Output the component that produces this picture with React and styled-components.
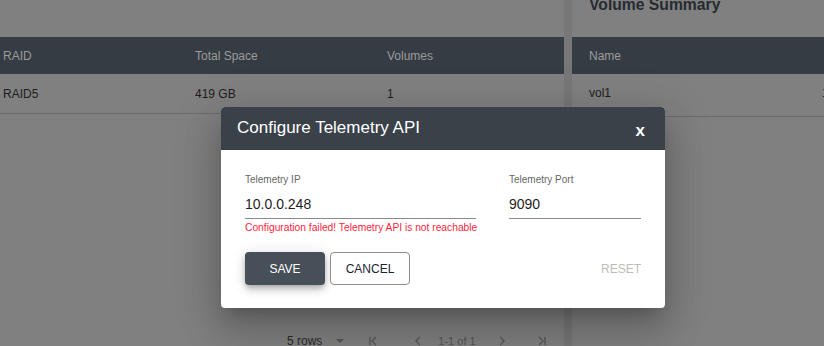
import React from "react";
import styled, { createGlobalStyle } from "styled-components";

const Global = createGlobalStyle`
  html, body { margin: 0; padding: 0; background: #808080; }
  body { font-family: "Liberation Sans", Arial, sans-serif; }
  * { box-sizing: border-box; }
`;

const Screen = styled.div`
  position: relative;
  width: 824px;
  height: 346px;
  overflow: hidden;
  background: #808080;
  display: flex;
  align-items: flex-start;
`;

const Panel = styled.section`
  width: ${(p) => p.$width};
  flex: ${(p) => (p.$grow ? 1 : "none")};
  display: flex;
  flex-direction: column;
  overflow: hidden;
`;

const Divider = styled.div`
  width: 8px;
  align-self: stretch;
  background: #777777;
`;

const TitleBar = styled.div`
  height: 37px;
  padding-left: ${(p) => p.$pad || 0}px;
`;

const Title = styled.h2`
  margin: -4px 0 0;
  font-size: 15.7px;
  line-height: 18px;
  font-weight: bold;
  color: #262b31;
  white-space: nowrap;
`;

const HeadRow = styled.div`
  display: flex;
  height: 37px;
  align-items: center;
  background: #353c44;
  padding-left: ${(p) => p.$pad}px;
`;

const BodyRow = styled.div`
  display: flex;
  height: ${(p) => p.$h}px;
  align-items: center;
  border-bottom: 1px solid #6c6c6c;
  padding-left: ${(p) => p.$pad}px;
  padding-bottom: ${(p) => p.$padBottom || 0}px;
`;

const Cell = styled.div`
  width: ${(p) => p.$w}px;
  flex: none;
  font-size: 12px;
  color: ${(p) => (p.$head ? "#9b9b9b" : "#1e1e1e")};
  white-space: nowrap;
`;

const Filler = styled.div`
  height: ${(p) => p.$h}px;
`;

const Pager = styled.div`
  display: flex;
  align-items: center;
  height: 40px;
  padding-left: 287px;
  font-size: 12px;
  color: #2a2a2a;
`;

const PagerText = styled.span`
  font-size: ${(p) => p.$size || 12}px;
  color: ${(p) => p.$color || "#2a2a2a"};
  margin-right: ${(p) => p.$mr || 0}px;
  white-space: nowrap;
`;

const PagerIcon = styled.svg`
  flex: none;
  margin-right: ${(p) => p.$mr || 0}px;
`;

const Overlay = styled.div`
  position: absolute;
  inset: 0;
  padding: 107px 0 0 221px;
`;

const Modal = styled.div`
  width: 444px;
  height: 201px;
  background: #ffffff;
  border-radius: 4px;
  overflow: hidden;
  box-shadow: 0 11px 15px -7px rgba(0, 0, 0, 0.2),
    0 24px 38px 3px rgba(0, 0, 0, 0.14), 0 9px 46px 8px rgba(0, 0, 0, 0.12);
  display: flex;
  flex-direction: column;
`;

const ModalHead = styled.div`
  height: 43px;
  background: #3a4149;
  display: flex;
  align-items: center;
  justify-content: space-between;
  padding: 0 20px 0 16px;
`;

const ModalTitle = styled.div`
  font-size: 17px;
  color: #ffffff;
  margin-top: -1px;
`;

const Close = styled.button`
  border: none;
  background: none;
  padding: 0;
  color: #ffffff;
  font-family: "Liberation Sans", Arial, sans-serif;
  font-weight: bold;
  font-size: 17px;
  line-height: 17px;
  margin-top: 3px;
`;

const ModalBody = styled.div`
  padding: 24px 24px 0;
`;

const Fields = styled.div`
  display: flex;
  gap: 33px;
`;

const Field = styled.div`
  width: ${(p) => p.$w}px;
  display: flex;
  flex-direction: column;
`;

const Label = styled.label`
  font-size: 10px;
  line-height: 12px;
  color: #666666;
`;

const Input = styled.div`
  margin-top: 10px;
  font-size: 14px;
  line-height: 17px;
  color: #1e1e1e;
  padding-bottom: 5px;
  border-bottom: 1px solid #8a8a8a;
`;

const ErrorText = styled.div`
  margin-top: 3px;
  font-size: 10.25px;
  line-height: 12px;
  color: #ff1f3d;
  white-space: nowrap;
`;

const Actions = styled.div`
  display: flex;
  align-items: center;
  gap: 5px;
  margin-top: 18px;
`;

const Button = styled.button`
  width: 80px;
  height: 33px;
  border-radius: 4px;
  font-family: "Liberation Sans", Arial, sans-serif;
  font-size: 12px;
  padding: 0;
  background: ${(p) => (p.$primary ? "#474f58" : "#ffffff")};
  color: ${(p) => (p.$primary ? "#ffffff" : "#1e2430")};
  border: ${(p) => (p.$primary ? "none" : "1px solid #8d8d8d")};
  box-shadow: ${(p) =>
    p.$primary
      ? "0 3px 5px -1px rgba(0,0,0,0.2), 0 5px 8px 0 rgba(0,0,0,0.14), 0 1px 14px 0 rgba(0,0,0,0.12)"
      : "none"};
`;

const TextButton = styled.button`
  margin-left: auto;
  border: none;
  background: none;
  padding: 0;
  font-family: "Liberation Sans", Arial, sans-serif;
  font-size: 12px;
  color: #bdbdbd;
`;

const Chevron = ({ dir, bar, mr }) => (
  <PagerIcon $mr={mr} width="12" height="12" viewBox="0 0 12 12" fill="none" stroke="#555" strokeWidth="1.3">
    {dir === "left" ? <path d="M8 2 L4 6 L8 10" /> : <path d="M4 2 L8 6 L4 10" />}
    {bar && (dir === "left" ? <path d="M2 2 V10" /> : <path d="M10 2 V10" />)}
  </PagerIcon>
);

export default function App() {
  return (
    <>
      <Global />
      <Screen>
        <Panel $width="564px">
          <TitleBar />
          <HeadRow $pad={3}>
            <Cell $w={192} $head>RAID</Cell>
            <Cell $w={192} $head>Total Space</Cell>
            <Cell $w={177} $head>Volumes</Cell>
          </HeadRow>
          <BodyRow $h={40} $pad={3}>
            <Cell $w={192}>RAID5</Cell>
            <Cell $w={192}>419 GB</Cell>
            <Cell $w={177}>1</Cell>
          </BodyRow>
          <Filler $h={207} />
          <Pager>
            <PagerText $mr={14}>5 rows</PagerText>
            <PagerIcon $mr={24} width="8" height="5" viewBox="0 0 8 5">
              <path d="M0 0 H8 L4 4 Z" fill="#555" />
            </PagerIcon>
            <Chevron dir="left" bar mr={32} />
            <Chevron dir="left" mr={14} />
            <PagerText $size={11} $color="#555" $mr={20}>1-1 of 1</PagerText>
            <Chevron dir="right" mr={27} />
            <Chevron dir="right" bar />
          </Pager>
        </Panel>
        <Divider />
        <Panel $grow>
          <TitleBar $pad={17}>
            <Title>Volume Summary</Title>
          </TitleBar>
          <HeadRow $pad={17}>
            <Cell $w={233} $head>Name</Cell>
          </HeadRow>
          <BodyRow $h={43} $pad={17} $padBottom={4}>
            <Cell $w={233}>vol1</Cell>
            <Cell $w={60}>1</Cell>
          </BodyRow>
        </Panel>
        <Overlay>
          <Modal>
            <ModalHead>
              <ModalTitle>Configure Telemetry API</ModalTitle>
              <Close>x</Close>
            </ModalHead>
            <ModalBody>
              <Fields>
                <Field $w={231}>
                  <Label>Telemetry IP</Label>
                  <Input>10.0.0.248</Input>
                  <ErrorText>Configuration failed! Telemetry API is not reachable</ErrorText>
                </Field>
                <Field $w={132}>
                  <Label>Telemetry Port</Label>
                  <Input>9090</Input>
                </Field>
              </Fields>
              <Actions>
                <Button $primary>SAVE</Button>
                <Button>CANCEL</Button>
                <TextButton>RESET</TextButton>
              </Actions>
            </ModalBody>
          </Modal>
        </Overlay>
      </Screen>
    </>
  );
}
